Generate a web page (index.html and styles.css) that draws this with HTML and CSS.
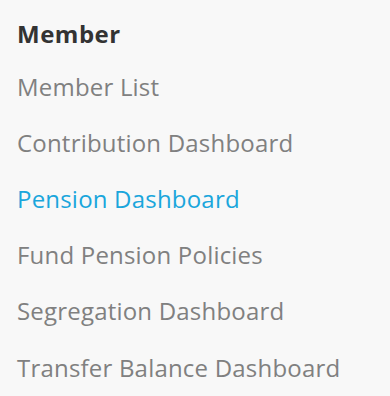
FILE: index.html
```html
<!DOCTYPE html>
<html>
<head>
<meta charset="utf-8">
<link rel="stylesheet" href="styles.css">
</head>
<body>
<nav class="menu">
  <h2 class="menu-title">Member</h2>
  <ul class="menu-list">
    <li class="menu-item">Member List</li>
    <li class="menu-item">Contribution Dashboard</li>
    <li class="menu-item active">Pension Dashboard</li>
    <li class="menu-item">Fund Pension Policies</li>
    <li class="menu-item">Segregation Dashboard</li>
    <li class="menu-item">Transfer Balance Dashboard</li>
  </ul>
</nav>
</body>
</html>
```
FILE: styles.css
```css
html, body {
  margin: 0;
  padding: 0;
  background: #f8f8f8;
}
.menu {
  padding: 9px 0 0 17px;
  font-family: "Open Sans", sans-serif;
  font-variant-ligatures: none;
}
.menu-title {
  margin: 0;
  font-size: 24px;
  font-weight: 700;
  color: #333333;
  line-height: 49.6px;
  letter-spacing: 0.5px;
}
.menu-list {
  list-style: none;
  margin: 0;
  padding: 0;
}
.menu-item {
  font-size: 24px;
  line-height: 56.2px;
  letter-spacing: 0.2px;
  color: #808080;
}
.menu-item.active {
  color: #1aa6dc;
}
```
